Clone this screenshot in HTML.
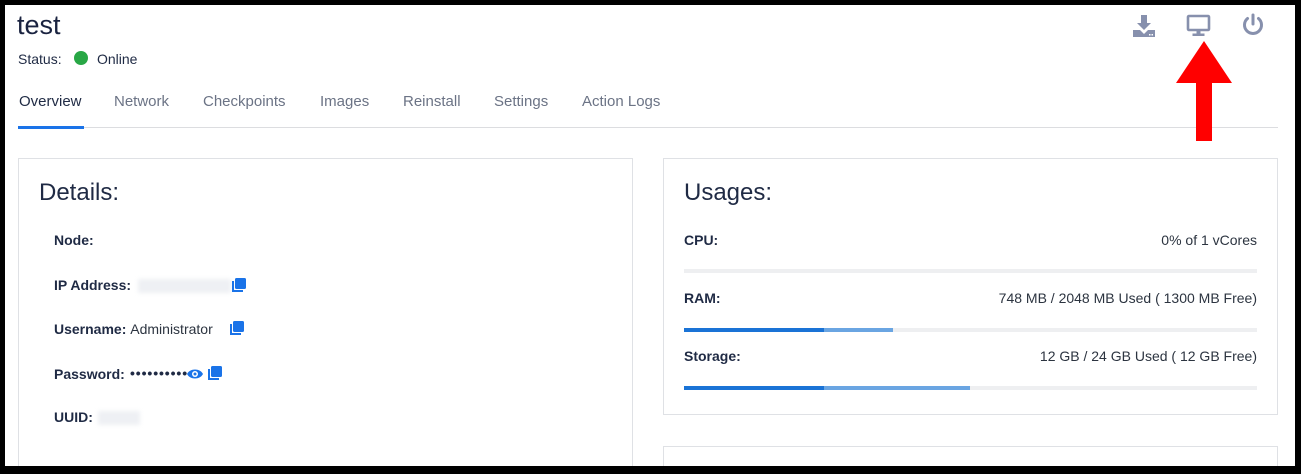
<!DOCTYPE html>
<html><head><style>
*{margin:0;padding:0;box-sizing:border-box}
html,body{width:1301px;height:474px;overflow:hidden}
body{background:#000;position:relative;font-family:"Liberation Sans",sans-serif;color:#1f2a44}
#w{position:absolute;left:5px;top:5px;width:1290px;height:461px;background:#fff;overflow:hidden}
.a{position:absolute;white-space:nowrap}
.card{position:absolute;border:1px solid #dfe1e5;background:#fff}
.lbl{font-weight:bold;font-size:14px;color:#1f2a44}
.val{font-size:14px;color:#2c3440}
.bar{position:absolute;height:4px;background:#eeeff1;left:20px;width:573px}
.bar i{position:absolute;top:0;height:4px;display:block}
.tab{font-size:15px;color:#6b7385;top:88px}
</style></head><body>
<div id="w">
<div class="a" style="left:12px;top:5px;font-size:27px;color:#1a2340">test</div>
<div class="a" style="left:13px;top:46px;font-size:14px;color:#1f2a44">Status:</div>
<div class="a" style="left:69px;top:46px;width:14px;height:14px;border-radius:50%;background:#28a745"></div>
<div class="a" style="left:92px;top:46px;font-size:14px;color:#1f2a44">Online</div>
<div class="a tab" style="left:14px;color:#1f2a44">Overview</div>
<div class="a tab" style="left:109px">Network</div>
<div class="a tab" style="left:198px">Checkpoints</div>
<div class="a tab" style="left:315px">Images</div>
<div class="a tab" style="left:398px">Reinstall</div>
<div class="a tab" style="left:489px">Settings</div>
<div class="a tab" style="left:577px">Action Logs</div>
<div class="a" style="left:13px;top:122px;width:1260px;height:1px;background:#dcdde0"></div>
<div class="a" style="left:13px;top:121px;width:66px;height:3px;background:#1a73e8"></div>
<svg class="a" style="left:1127px;top:9px" width="24" height="24" viewBox="0 0 24 24" fill="#8790ad"><path d="M9 1h6v8h4l-7 7-7-7h4z"/><path d="M1 16h7l4 4 4-4h7v7H1z"/><rect x="17" y="20" width="1.5" height="1.5" fill="#fff"/><rect x="19.5" y="20" width="1.5" height="1.5" fill="#fff"/></svg>
<svg class="a" style="left:1181px;top:9px" width="25" height="24" viewBox="0 0 25 24"><rect x="2" y="2" width="21" height="14" rx="1" fill="none" stroke="#8790ad" stroke-width="2.6"/><rect x="10.5" y="16" width="4" height="4" fill="#8790ad"/><rect x="6.5" y="19.5" width="12" height="2.5" fill="#8790ad"/></svg>
<svg class="a" style="left:1236px;top:8px" width="24" height="24" viewBox="0 0 24 24" fill="none" stroke="#8790ad" stroke-width="3" stroke-linecap="round"><path d="M12 2v9"/><path d="M6.5 5.5a8.5 8.5 0 1 0 11 0"/></svg>
<svg class="a" style="left:1160px;top:30px" width="80" height="110"><polygon points="39,6 67,48 47,48 47,106 31,106 31,48 11,48" fill="#ff0000"/></svg>
<div class="card" style="left:13px;top:153px;width:615px;height:320px">
<div class="a" style="left:20px;top:20px;font-size:24px;color:#1f2a44">Details:</div>
<div class="a lbl" style="left:35px;top:73px">Node:</div>
<div class="a lbl" style="left:35px;top:118px">IP Address:</div>
<div class="a" style="left:119px;top:120px;width:93px;height:14px;background:#eef0f4;filter:blur(2px)"></div>
<svg class="a" style="left:212px;top:118px" width="16" height="16" viewBox="0 0 16 16"><rect x="4" y="1" width="11" height="11" rx="1.5" fill="#1a73e8"/><path d="M2 4v10h10" fill="none" stroke="#1a73e8" stroke-width="2"/></svg>
<div class="a lbl" style="left:35px;top:162px">Username: <span class="val" style="font-weight:normal">Administrator</span></div>
<svg class="a" style="left:210px;top:161px" width="16" height="16" viewBox="0 0 16 16"><rect x="4" y="1" width="11" height="11" rx="1.5" fill="#1a73e8"/><path d="M2 4v10h10" fill="none" stroke="#1a73e8" stroke-width="2"/></svg>
<div class="a lbl" style="left:35px;top:207px">Password:</div>
<div class="a" style="left:111px;top:206px;font-size:14px;font-weight:bold;letter-spacing:0.9px">••••••••••</div>
<svg class="a" style="left:167px;top:208px" width="18" height="14" viewBox="0 0 18 14"><path d="M1 7C4 1 14 1 17 7C14 13 4 13 1 7z" fill="#1a73e8"/><circle cx="9" cy="7" r="3" fill="#fff"/><circle cx="9" cy="7" r="1.5" fill="#1a73e8"/></svg>
<svg class="a" style="left:188px;top:206px" width="16" height="16" viewBox="0 0 16 16"><rect x="4" y="1" width="11" height="11" rx="1.5" fill="#1a73e8"/><path d="M2 4v10h10" fill="none" stroke="#1a73e8" stroke-width="2"/></svg>
<div class="a lbl" style="left:35px;top:250px">UUID:</div>
<div class="a" style="left:79px;top:252px;width:42px;height:14px;background:#eef0f4;filter:blur(2px)"></div>
</div>
<div class="card" style="left:658px;top:153px;width:615px;height:257px">
<div class="a" style="left:20px;top:20px;font-size:24px;color:#1f2a44">Usages:</div>
<div class="a lbl" style="left:20px;top:73px">CPU:</div>
<div class="a val" style="right:20px;top:73px">0% of 1 vCores</div>
<div class="bar" style="top:110px"></div>
<div class="a lbl" style="left:20px;top:131px">RAM:</div>
<div class="a val" style="right:20px;top:131px">748 MB / 2048 MB Used ( 1300 MB Free)</div>
<div class="bar" style="top:169px"><i style="left:0;width:209px;background:#6aa5e2"></i><i style="left:0;width:140px;background:#1a73d6"></i></div>
<div class="a lbl" style="left:20px;top:189px">Storage:</div>
<div class="a val" style="right:20px;top:189px">12 GB / 24 GB Used ( 12 GB Free)</div>
<div class="bar" style="top:227px"><i style="left:0;width:286px;background:#6aa5e2"></i><i style="left:0;width:140px;background:#1a73d6"></i></div>
</div>
<div class="card" style="left:658px;top:441px;width:615px;height:30px"></div>
</div>
</body></html>
